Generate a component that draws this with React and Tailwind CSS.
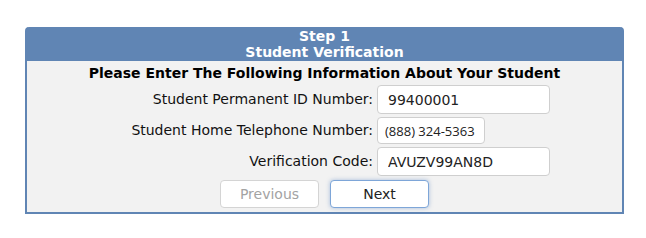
import React from 'react';

const verdana = { fontFamily: '"DejaVu Sans", Verdana, sans-serif' };

function Row({ label, children }) {
  return (
    <div className="flex items-center">
      <label className="w-[249px] pr-[4px] text-right text-[14px] text-[#111]">{label}</label>
      {children}
    </div>
  );
}

export default function App() {
  return (
    <div className="w-[646px] h-[238px] bg-white pt-[27px] pl-[25px]" style={verdana}>
      <div className="w-[599px] rounded-t-[4px] bg-[#6085b4] border-x-2 border-b-2 border-[#6085b4]">
        <div className="py-[1px] text-center text-[14px] leading-[16px] font-bold text-white">
          <div>Step 1</div>
          <div>Student Verification</div>
        </div>
        <div className="bg-[#f2f2f2] pb-[4px]">
          <div className="pt-[3px] text-center text-[14px] leading-[18px] font-bold text-black">
            Please Enter The Following Information About Your Student
          </div>
          <div className="mt-[3px] flex flex-col gap-[3px] pl-[101px]">
            <Row label="Student Permanent ID Number:">
              <input
                readOnly
                value="99400001"
                className="w-[173px] h-[29px] rounded-[4px] border border-[#cfcfcf] bg-white pl-[10px] text-[14px] text-[#222] outline-none"
                style={verdana}
              />
            </Row>
            <Row label="Student Home Telephone Number:">
              <input
                readOnly
                value="(888) 324-5363"
                className="w-[108px] h-[27px] rounded-[4px] border border-[#cfcfcf] bg-white pl-[7px] text-[13px] text-[#222] outline-none"
                style={{ fontFamily: '"Open Sans", "Noto Sans", sans-serif' }}
              />
            </Row>
            <Row label="Verification Code:">
              <input
                readOnly
                value="AVUZV99AN8D"
                className="w-[173px] h-[29px] rounded-[4px] border border-[#cfcfcf] bg-white pl-[10px] text-[14px] text-[#222] outline-none"
                style={verdana}
              />
            </Row>
          </div>
          <div className="mt-[4px] flex justify-center gap-[11px]">
            <button
              className="w-[99px] h-[28px] rounded-[4px] border border-[#d4d4d4] bg-white text-[14px] text-[#a3a3a3]"
              style={verdana}
            >
              Previous
            </button>
            <button
              className="w-[99px] h-[28px] rounded-[4px] border border-[#7ea6d8] bg-white text-[14px] text-[#222] shadow-[0_0_4px_rgba(96,140,200,0.5)]"
              style={verdana}
            >
              Next
            </button>
          </div>
        </div>
      </div>
    </div>
  );
}
